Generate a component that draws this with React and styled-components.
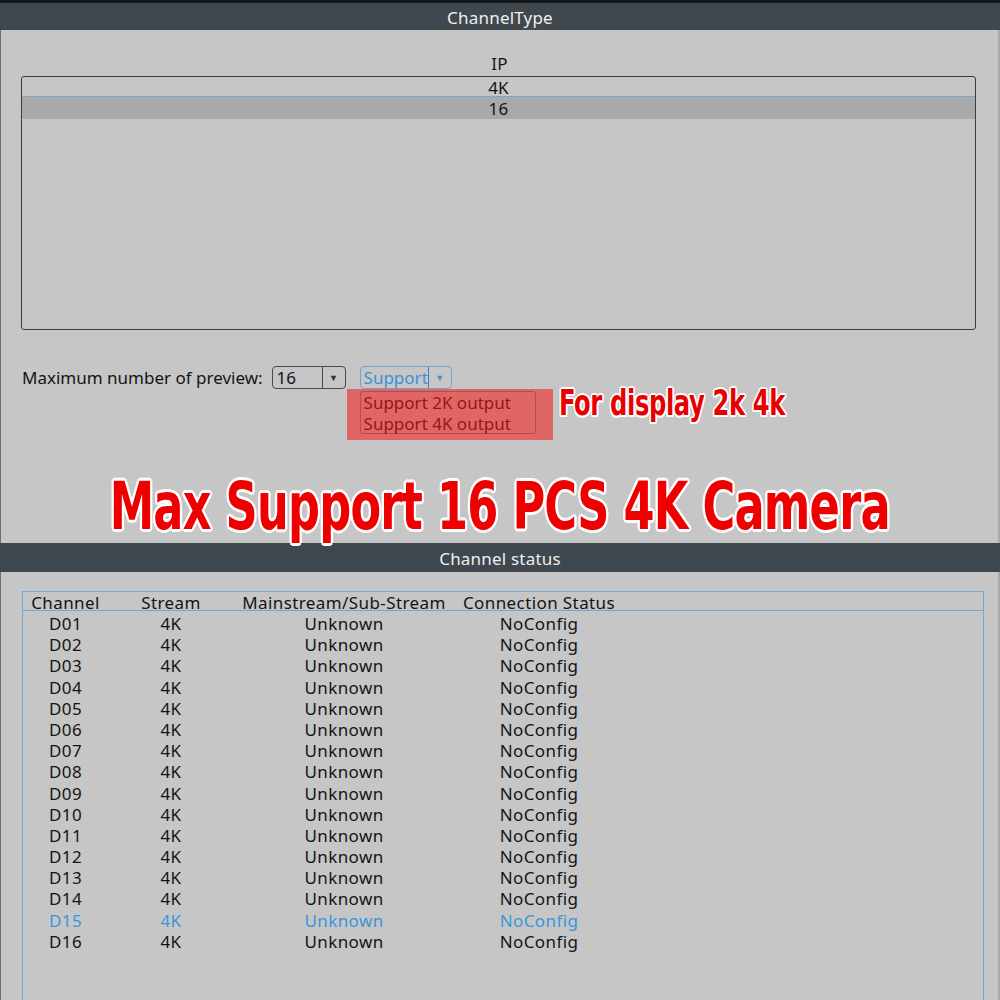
import React from "react";
import styled, { createGlobalStyle } from "styled-components";

const Global = createGlobalStyle`
  html, body {
    margin: 0;
    padding: 0;
    background: #c6c6c6;
    overflow: hidden;
  }
  body {
    font-family: "Noto Sans", "Open Sans", sans-serif;
  }
`;

/* 整体框架 */
const Frame = styled.div`
  width: 1000px;
  height: 1000px;
  display: flex;
  flex-direction: column;
  background: #c6c6c6;
  border-top: 3px solid #16191c;
  box-sizing: border-box;
  overflow: hidden;
  color: #141414;
  font-size: 17px;
  letter-spacing: 0.2px;
`;

const TitleBar = styled.div`
  height: ${p => p.$h}px;
  flex: none;
  background: #3e484e;
  color: #eeeeee;
  font-size: 17px;
  display: flex;
  align-items: center;
  justify-content: center;
  padding-top: 1px;
  box-sizing: border-box;
`;

const Panel = styled.div`
  flex: ${p => (p.$grow ? 1 : "none")};
  height: ${p => (p.$h ? `${p.$h}px` : "auto")};
  border-left: 1px solid #6e6e6e;
  border-right: 2px solid #a9a9a9;
  display: flex;
  flex-direction: column;
  position: relative;
  box-sizing: border-box;
`;

const ListCaption = styled.div`
  height: 46px;
  display: flex;
  align-items: flex-end;
  justify-content: center;
  padding-bottom: 1px;
  box-sizing: border-box;
`;

const ListBox = styled.div`
  margin: 0 22px 0 20px;
  height: 254px;
  border: 1px solid #3c3c3c;
  border-radius: 3px;
  box-sizing: border-box;
`;

const ListRow = styled.div`
  height: ${p => (p.$sel ? 22 : 20)}px;
  display: flex;
  align-items: center;
  justify-content: center;
  padding-top: ${p => (p.$sel ? 0 : 1)}px;
  box-sizing: border-box;
  background: ${p => (p.$sel ? "#a9a9a9" : "transparent")};
  border-bottom: ${p => (p.$line ? "1px solid #7ea6c2" : "none")};
`;

const PreviewRow = styled.div`
  margin-top: 36px;
  padding-left: 21px;
  height: 23px;
  display: flex;
  align-items: center;
  letter-spacing: 0;
`;

const Label = styled.span`
  margin-right: 9px;
`;

const Select = styled.div`
  position: relative;
  width: ${p => p.$w}px;
  height: 23px;
  box-sizing: border-box;
  border: 1px solid ${p => (p.$active ? "#6da6d6" : "#4a4a4a")};
  border-radius: 4px;
  display: flex;
  align-items: stretch;
  color: ${p => (p.$active ? "#3a92d6" : "#141414")};
  margin-right: ${p => p.$mr || 0}px;
`;

const SelectValue = styled.div`
  flex: 1;
  display: flex;
  align-items: center;
  padding-left: ${p => p.$pl}px;
`;

const SelectArrow = styled.div`
  width: ${p => p.$w}px;
  border-left: 1px solid ${p => (p.$active ? "#3a7fc0" : "#4a4a4a")};
  display: flex;
  align-items: center;
  justify-content: center;
  font-size: 9px;
  color: ${p => (p.$active ? "#3a92d6" : "#333")};
`;

const Highlight = styled.div`
  position: absolute;
  left: -14px;
  top: 22px;
  width: 206px;
  height: 51px;
  background: #e06666;
`;

const Menu = styled.div`
  position: absolute;
  left: -1px;
  top: 24px;
  width: 176px;
  height: 43px;
  box-sizing: border-box;
  border: 1px solid #b34d55;
  border-radius: 3px;
  padding-left: 3px;
  display: flex;
  flex-direction: column;
  color: #9a1414;
  line-height: 21px;
`;

const Callout = styled.div`
  position: absolute;
  left: 198px;
  top: 16px;
  white-space: nowrap;
  font-family: "DejaVu Sans Condensed", "DejaVu Sans", sans-serif;
  font-weight: bold;
  font-size: 35px;
  letter-spacing: -0.5px;
  color: #e80000;
  transform: scaleX(0.77);
  transform-origin: left top;
  text-shadow: 2px 0 #fff, -2px 0 #fff, 0 2px #fff, 0 -2px #fff,
    1.5px 1.5px #fff, -1.5px 1.5px #fff, 1.5px -1.5px #fff, -1.5px -1.5px #fff;
`;

const Banner = styled.div`
  margin-top: auto;
  height: 69px;
  display: flex;
  justify-content: center;
  align-items: flex-start;
  overflow: visible;
`;

const BannerText = styled.div`
  white-space: nowrap;
  font-family: "DejaVu Sans Condensed", "DejaVu Sans", sans-serif;
  font-weight: bold;
  font-size: 66px;
  line-height: 66px;
  letter-spacing: -1px;
  color: #ee0000;
  transform: scaleX(0.752);
  text-shadow: 3px 0 #fff, -3px 0 #fff, 0 3px #fff, 0 -3px #fff,
    2px 2px #fff, -2px 2px #fff, 2px -2px #fff, -2px -2px #fff;
`;

const Table = styled.div`
  margin: 19px 14px 0 21px;
  flex: 1;
  border: 1px solid #6ea8d8;
  border-bottom: none;
  box-sizing: border-box;
  letter-spacing: 0.4px;
`;

const TRow = styled.div`
  display: grid;
  grid-template-columns: 85px 126px 220px 170px;
  box-sizing: border-box;
  height: ${p => (p.$head ? 19 : 21.2)}px;
  padding-top: 4px;
  line-height: ${p => (p.$head ? 14 : 17)}px;
  color: ${p => (p.$sel ? "#3a96d9" : "#141414")};
  border-bottom: ${p => (p.$head ? "1px solid #6ea8d8" : "none")};
`;

const Cell = styled.div`
  text-align: center;
  white-space: nowrap;
`;

const rows = Array.from({ length: 16 }, (_, i) => ({
  ch: "D" + String(i + 1).padStart(2, "0"),
  stream: "4K",
  sub: "Unknown",
  status: "NoConfig",
}));

export default function App() {
  return (
    <>
      <Global />
      <Frame>
        <TitleBar $h={27}>ChannelType</TitleBar>
        <Panel $h={513}>
          <ListCaption>IP</ListCaption>
          <ListBox>
            <ListRow $line>4K</ListRow>
            <ListRow $sel>16</ListRow>
          </ListBox>
          <PreviewRow>
            <Label>Maximum number of preview:</Label>
            <Select $w={74} $mr={14}>
              <SelectValue $pl={4}>16</SelectValue>
              <SelectArrow $w={22}>▼</SelectArrow>
            </Select>
            <Select $w={92} $active>
              <SelectValue $pl={3}>Support</SelectValue>
              <SelectArrow $w={22} $active>▼</SelectArrow>
              <Highlight />
              <Menu>
                <span>Support 2K output</span>
                <span>Support 4K output</span>
              </Menu>
              <Callout>For display 2k 4k</Callout>
            </Select>
          </PreviewRow>
          <Banner>
            <BannerText>Max Support 16 PCS 4K Camera</BannerText>
          </Banner>
        </Panel>
        <TitleBar $h={29}>Channel status</TitleBar>
        <Panel $grow>
          <Table>
            <TRow $head>
              <Cell>Channel</Cell>
              <Cell>Stream</Cell>
              <Cell>Mainstream/Sub-Stream</Cell>
              <Cell>Connection Status</Cell>
            </TRow>
            {rows.map((r, i) => (
              <TRow key={r.ch} $sel={i === 14}>
                <Cell>{r.ch}</Cell>
                <Cell>{r.stream}</Cell>
                <Cell>{r.sub}</Cell>
                <Cell>{r.status}</Cell>
              </TRow>
            ))}
          </Table>
        </Panel>
      </Frame>
    </>
  );
}
